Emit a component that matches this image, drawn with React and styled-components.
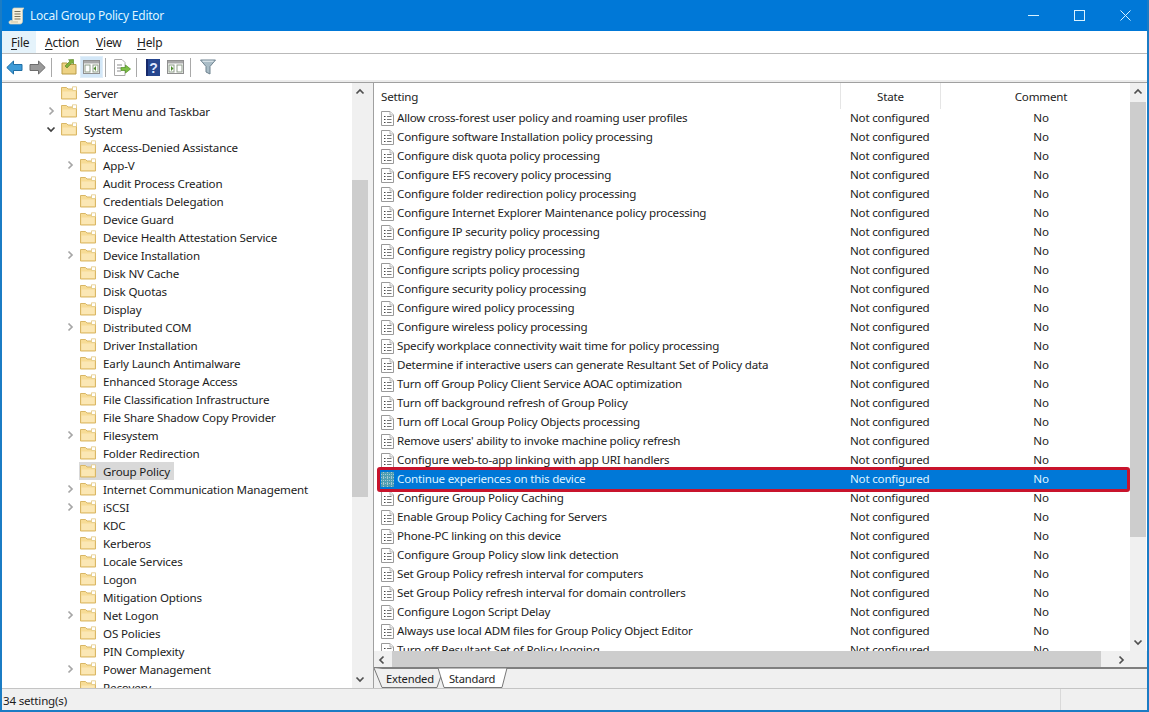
import React from "react";
import styled, { createGlobalStyle } from "styled-components";

const treeRows = [
  [1, "", "Server"],
  [1, ">", "Start Menu and Taskbar"],
  [1, "v", "System"],
  [2, "", "Access-Denied Assistance"],
  [2, ">", "App-V"],
  [2, "", "Audit Process Creation"],
  [2, "", "Credentials Delegation"],
  [2, "", "Device Guard"],
  [2, "", "Device Health Attestation Service"],
  [2, ">", "Device Installation"],
  [2, "", "Disk NV Cache"],
  [2, "", "Disk Quotas"],
  [2, "", "Display"],
  [2, ">", "Distributed COM"],
  [2, "", "Driver Installation"],
  [2, "", "Early Launch Antimalware"],
  [2, "", "Enhanced Storage Access"],
  [2, "", "File Classification Infrastructure"],
  [2, "", "File Share Shadow Copy Provider"],
  [2, ">", "Filesystem"],
  [2, "", "Folder Redirection"],
  [2, "", "Group Policy", true],
  [2, ">", "Internet Communication Management"],
  [2, ">", "iSCSI"],
  [2, "", "KDC"],
  [2, "", "Kerberos"],
  [2, "", "Locale Services"],
  [2, "", "Logon"],
  [2, "", "Mitigation Options"],
  [2, ">", "Net Logon"],
  [2, "", "OS Policies"],
  [2, "", "PIN Complexity"],
  [2, ">", "Power Management"],
  [2, "", "Recovery"],
];

const settings = [
  "Allow cross-forest user policy and roaming user profiles",
  "Configure software Installation policy processing",
  "Configure disk quota policy processing",
  "Configure EFS recovery policy processing",
  "Configure folder redirection policy processing",
  "Configure Internet Explorer Maintenance policy processing",
  "Configure IP security policy processing",
  "Configure registry policy processing",
  "Configure scripts policy processing",
  "Configure security policy processing",
  "Configure wired policy processing",
  "Configure wireless policy processing",
  "Specify workplace connectivity wait time for policy processing",
  "Determine if interactive users can generate Resultant Set of Policy data",
  "Turn off Group Policy Client Service AOAC optimization",
  "Turn off background refresh of Group Policy",
  "Turn off Local Group Policy Objects processing",
  "Remove users' ability to invoke machine policy refresh",
  "Configure web-to-app linking with app URI handlers",
  "Continue experiences on this device",
  "Configure Group Policy Caching",
  "Enable Group Policy Caching for Servers",
  "Phone-PC linking on this device",
  "Configure Group Policy slow link detection",
  "Set Group Policy refresh interval for computers",
  "Set Group Policy refresh interval for domain controllers",
  "Configure Logon Script Delay",
  "Always use local ADM files for Group Policy Object Editor",
  "Turn off Resultant Set of Policy logging",
];

const SELECTED = "Continue experiences on this device";

const GlobalStyle = createGlobalStyle`
  html, body {
    margin: 0;
    padding: 0;
    background: #0078d7;
  }
  * {
    box-sizing: border-box;
  }
`;

const Window = styled.div`
  width: 1149px;
  height: 712px;
  display: grid;
  grid-template-columns: minmax(0, 1fr);
  grid-template-rows: 31px 23px 26px 3px 606px 1fr;
  background: #fff;
  border: solid #1b7cc4;
  border-width: 0 2px 2px 2px;
  font-family: "Noto Sans", "Open Sans", sans-serif;
  font-size: 11.6px;
  letter-spacing: -0.2px;
  color: #1c1c1c;
  overflow: hidden;
`;

const TitleBar = styled.div`
  margin: 0 -2px;
  background: #0078d7;
  color: #dff4ff;
  display: flex;
  align-items: center;
  padding: 0 0 0 8px;
  font-size: 12px;
  letter-spacing: -0.25px;
`;

const TitleText = styled.span`
  margin-left: 5px;
  flex: 1;
`;

const WindowButton = styled.div`
  width: 46px;
  height: 31px;
  display: flex;
  align-items: center;
  justify-content: center;
  margin-right: ${(p) => p.$gap || 0}px;
`;

const MenuBar = styled.div`
  display: flex;
  align-items: stretch;
  border-bottom: 1px solid #b9b9b9;
  background: #fff;
`;

const MenuItem = styled.div`
  width: ${(p) => p.$w}px;
  display: flex;
  align-items: center;
  padding-left: 9px;
  background: ${(p) => (p.$active ? "#e5f3fb" : "transparent")};
  font-size: 12px;
  letter-spacing: -0.2px;
  u {
    text-decoration-thickness: 1px;
    text-underline-offset: 2px;
  }
`;

const Toolbar = styled.div`
  display: flex;
  align-items: center;
  padding-left: 1px;
  background: #fff;
`;

const ToolButton = styled.div`
  width: 23px;
  height: 22px;
  display: flex;
  align-items: center;
  justify-content: center;
  background: ${(p) => (p.$on ? "#d3e7f7" : "transparent")};
  border: 1px solid ${(p) => (p.$on ? "#e0eef9" : "transparent")};
`;

const ToolSep = styled.div`
  width: 1px;
  height: 19px;
  background: #a9a9a9;
  margin: 0 ${(p) => p.$r}px 0 ${(p) => p.$l}px;
`;

const GrayBand = styled.div`
  background: #ececec;
  border-bottom: 1px solid #a0a0a0;
`;

const Panes = styled.div`
  display: grid;
  grid-template-columns: 366px 5px minmax(0, 1fr);
  min-height: 0;
  background: #f0f0f0;
  border-bottom: 1px solid #c4c4c4;
`;

const TreePane = styled.div`
  display: flex;
  background: #fff;
  min-height: 0;
`;

const TreeList = styled.div`
  flex: 1;
  overflow: hidden;
  padding-top: 1px;
`;

const TreeRow = styled.div`
  height: 18px;
  display: flex;
  align-items: center;
  padding-left: ${(p) => (p.$level === 1 ? 43 : 62)}px;
  white-space: nowrap;
`;

const Twisty = styled.div`
  width: 12px;
  height: 18px;
  display: flex;
  align-items: center;
  justify-content: center;
  margin-right: 3px;
`;

const TreeLabel = styled.span`
  margin-left: 7px;
  letter-spacing: -0.16px;
`;

const FolderWrap = styled.div`
  display: flex;
  align-items: center;
  background: ${(p) => (p.$on ? "#d9d9d9" : "transparent")};
  height: 18px;
  padding: 0 4px 0 1px;
`;

const Divider = styled.div`
  background: #f0f0f0;
`;

const RightPane = styled.div`
  display: grid;
  grid-template-columns: minmax(0, 1fr);
  grid-template-rows: minmax(0, 1fr) 16px 21px;
  min-height: 0;
  background: #fff;
  border-left: 1px solid #a0a0a0;
`;

const ListArea = styled.div`
  display: flex;
  min-height: 0;
`;

const ListColumn = styled.div`
  flex: 1;
  min-width: 0;
  overflow: hidden;
  display: flex;
  flex-direction: column;
`;

const Header = styled.div`
  flex: none;
  height: 26px;
  display: grid;
  grid-template-columns: 467px 100px 200px;
  align-items: stretch;
`;

const HeadCell = styled.div`
  display: flex;
  align-items: center;
  justify-content: ${(p) => (p.$center ? "center" : "flex-start")};
  padding-left: ${(p) => (p.$center ? 0 : 7)}px;
  border-right: ${(p) => (p.$line ? "1px solid #e5e5e5" : "0")};
`;

const Row = styled.div`
  flex: none;
  height: 19px;
  display: grid;
  grid-template-columns: 461px 100px 200px;
  align-items: center;
  margin-left: 6px;
  width: 747px;
  background: ${(p) => (p.$on ? "#0078d7" : "transparent")};
  color: ${(p) => (p.$on ? "#dff4ff" : "inherit")};
  position: relative;
  z-index: ${(p) => (p.$on ? 1 : 0)};
  &:after {
    content: "";
    display: ${(p) => (p.$on ? "block" : "none")};
    position: absolute;
    inset: -3px;
    border: 3px solid #c8142c;
    border-radius: 3px;
  }
`;

const NameCell = styled.div`
  display: flex;
  align-items: center;
  white-space: nowrap;
  margin-left: -6px;
  padding-left: 7px;
`;

const NameText = styled.span`
  margin: 0 0 2px 3px;
`;

const StateCell = styled.div`
  padding: 0 0 2px 9px;
  white-space: nowrap;
`;

const CommentCell = styled.div`
  padding-bottom: 2px;
  text-align: center;
`;

const ScrollV = styled.div`
  flex: none;
  width: 16px;
  margin-right: ${(p) => p.$gap || 0}px;
  background: #f0f0f0;
  display: flex;
  flex-direction: column;
`;

const ScrollH = styled.div`
  display: flex;
  background: #f0f0f0;
  padding-right: 18px;
`;

const Arrow = styled.div`
  flex: none;
  width: 16px;
  height: 18px;
  display: flex;
  align-items: center;
  justify-content: center;
`;

const VThumb = styled.div`
  flex: none;
  height: ${(p) => p.$h}px;
  margin-top: ${(p) => p.$top}px;
  background: #cdcdcd;
`;

const VSpacer = styled.div`
  flex: 1;
`;

const HThumb = styled.div`
  flex: 1;
  margin: 0 12px 0 2px;
  background: #cdcdcd;
`;

const TabStrip = styled.div`
  display: flex;
  align-items: center;
  background: #f0f0f0;
  border-top: 2px solid #7f7f7f;
  position: relative;
  padding: 0 0 1px 12px;
`;

const TabShapes = styled.svg`
  position: absolute;
  left: 0;
  top: -1px;
`;

const TabLabel = styled.span`
  position: relative;
  font-size: 11.2px;
  margin-right: ${(p) => p.$gap || 0}px;
`;

const StatusBar = styled.div`
  display: grid;
  grid-template-columns: 1fr 87px;
  background: #f0f0f0;
`;

const StatusCell = styled.div`
  display: flex;
  align-items: center;
  padding: 2px 0 0 1px;
  & + & {
    border-left: 1px solid #d9d9d9;
  }
`;

const Chevron = ({ dir, color = "#6a6a6a", size = 10, width = 1.7 }) => {
  const paths = {
    right: "M3.5 1.5 L7 5 L3.5 8.5",
    left: "M6.5 1.5 L3 5 L6.5 8.5",
    up: "M1.5 6.5 L5 3 L8.5 6.5",
    down: "M1.5 3.5 L5 7 L8.5 3.5",
  };
  return (
    <svg width={size} height={size} viewBox="0 0 10 10">
      <path d={paths[dir]} fill="none" stroke={color} strokeWidth={width} />
    </svg>
  );
};

const FolderIcon = () => (
  <svg width="16" height="14" viewBox="0 0 16 14">
    <path d="M0.5 13 V1.5 H5.5 L7 3 H15.5 V13 Z" fill="#f7dc96" stroke="#d9b766" />
    <path d="M1.5 12 V5.5 H14.5 V12 Z" fill="#fbe7b4" />
    <path d="M11.5 0.8 H15.5 V4.5 H11.5 Z" fill="#fff" stroke="#e2c77f" strokeWidth="0.8" />
  </svg>
);

const PolicyIcon = ({ on }) =>
  on ? (
    <svg width="13" height="15" viewBox="0 0 13 15">
      <rect x="0" y="0" width="13" height="15" fill="#4f9fb2" />
      <path d="M0 2.5 H13 M0 5.5 H13 M0 8.5 H13 M0 11.5 H13 M2.5 0 V15 M6.5 0 V15 M10.5 0 V15" stroke="#a7c9d3" strokeWidth="1" strokeDasharray="1 1" />
    </svg>
  ) : (
    <svg width="13" height="15" viewBox="0 0 13 15">
      <path d="M0.5 0.5 H9 L12.5 4 V14.5 H0.5 Z" fill="#fff" stroke="#9a9a9a" />
      <path d="M9 0.5 V4 H12.5" fill="#f0f0f0" stroke="#b5b5b5" />
      <path d="M3 5.5 H4.5 M3 8.5 H4.5 M3 11.5 H4.5" stroke="#444" strokeWidth="1.2" />
      <path d="M6 5.5 H10.5 M6 8.5 H10.5 M6 11.5 H10.5" stroke="#777" strokeWidth="1.2" />
    </svg>
  );

const AppIcon = () => (
  <svg width="17" height="18" viewBox="0 0 17 18">
    <path d="M6 1 H16 C15 2 14.5 3 14.5 4.5 V14 C14.5 16 13.5 17 12 17 H2.5 C0.5 17 0.5 14 2.5 13.5 H4.5 V3.5 C4.5 2 5 1.2 6 1 Z" fill="#f6f0dc" stroke="#d8d0b4" strokeWidth="0.7" />
    <path d="M6.5 4.5 H12.5 M6.5 7 H12.5 M6.5 9.5 H12.5 M6.5 12 H12.5" stroke="#77725e" strokeWidth="1" />
    <path d="M2.5 15 H10" stroke="#c7bf9f" strokeWidth="1" />
  </svg>
);

const NavArrow = ({ back, fill, stroke }) => (
  <svg width="17" height="15" viewBox="0 0 17 15" style={back ? undefined : { transform: "scaleX(-1)" }}>
    <path d="M0.8 7.5 L7.5 1 V4.5 H16 V10.5 H7.5 V14 Z" fill={fill} stroke={stroke} strokeLinejoin="round" />
  </svg>
);

const UpFolderIcon = () => (
  <svg width="16" height="16" viewBox="0 0 16 16">
    <path d="M1 15 V4 H6 L7 5.5 H15 V15 Z" fill="#edd284" stroke="#b99c46" />
    <path d="M4 7 L9 2 L7.5 0.8 L12.5 0.5 L12.5 5 L11 3.8 L6 9 Z" fill="#7fb13c" stroke="#4f7d1c" strokeWidth="0.6" />
  </svg>
);

const PaneIcon = ({ right }) => (
  <svg width="17" height="14" viewBox="0 0 17 14">
    <rect x="0.5" y="0.5" width="16" height="13" fill="#fff" stroke="#8f8f8f" />
    <rect x="1" y="1" width="15" height="2.5" fill="#a9a9a9" />
    <rect x="2" y="5" width="5" height="7" fill="none" stroke="#8f9e8a" />
    <rect x="10" y="5" width="5" height="7" fill="none" stroke="#8f9e8a" />
    <path d={right ? "M4 6 L4 11 L6.5 8.5 Z" : "M13 6 L13 11 L10.5 8.5 Z"} fill="#4c8c2b" />
  </svg>
);

const ExportIcon = () => (
  <svg width="17" height="17" viewBox="0 0 17 17">
    <path d="M0.5 0.5 H8 L11 3.5 V16.5 H0.5 Z" fill="#fff" stroke="#a8a8a8" />
    <path d="M3 6 H8 M3 9 H7 M3 12 H7" stroke="#8b8b8b" />
    <path d="M7 8.5 H11.5 V6 L16.5 10 L11.5 14 V11.5 H7 Z" fill="#7cbf45" stroke="#4f8d22" strokeWidth="0.7" />
  </svg>
);

const HelpIcon = () => (
  <svg width="14" height="17" viewBox="0 0 14 17">
    <rect x="0" y="0" width="14" height="17" fill="#26468f" />
    <rect x="0" y="0" width="2" height="17" fill="#16296a" />
    <text x="7.5" y="13.5" fontFamily="Liberation Sans, sans-serif" fontSize="14" fontWeight="700" fill="#dfe8ff" textAnchor="middle">?</text>
  </svg>
);

const FilterIcon = () => (
  <svg width="16" height="16" viewBox="0 0 16 16">
    <path d="M0.5 1 H15.5 L10 7.5 V15 L6 13 V7.5 Z" fill="#a9bcc6" stroke="#6f8390" />
    <path d="M2.5 2.2 H13.5" stroke="#e8f0f4" />
  </svg>
);

const App = () => (
  <Window>
    <GlobalStyle />
    <TitleBar>
      <AppIcon />
      <TitleText>Local Group Policy Editor</TitleText>
      <WindowButton>
        <svg width="11" height="11" viewBox="0 0 11 11">
          <path d="M0 5.5 H11" stroke="#d8f2ff" />
        </svg>
      </WindowButton>
      <WindowButton>
        <svg width="11" height="11" viewBox="0 0 11 11">
          <rect x="0.5" y="0.5" width="10" height="10" fill="none" stroke="#d8f2ff" />
        </svg>
      </WindowButton>
      <WindowButton $gap={1}>
        <svg width="11" height="11" viewBox="0 0 11 11">
          <path d="M0.5 0.5 L10.5 10.5 M10.5 0.5 L0.5 10.5" stroke="#d8f2ff" />
        </svg>
      </WindowButton>
    </TitleBar>
    <MenuBar>
      <MenuItem $active $w={34}>
        <span>
          <u>F</u>ile
        </span>
      </MenuItem>
      <MenuItem $w={51}>
        <span>
          <u>A</u>ction
        </span>
      </MenuItem>
      <MenuItem $w={41}>
        <span>
          <u>V</u>iew
        </span>
      </MenuItem>
      <MenuItem $w={40}>
        <span>
          <u>H</u>elp
        </span>
      </MenuItem>
    </MenuBar>
    <Toolbar>
      <ToolButton>
        <NavArrow back fill="#3d9bd8" stroke="#1f6ea5" />
      </ToolButton>
      <ToolButton>
        <NavArrow fill="#9a9a9a" stroke="#6d6d6d" />
      </ToolButton>
      <ToolSep $l={2} $r={5} />
      <ToolButton>
        <UpFolderIcon />
      </ToolButton>
      <ToolButton $on>
        <PaneIcon />
      </ToolButton>
      <ToolSep $l={2} $r={5} />
      <ToolButton>
        <ExportIcon />
      </ToolButton>
      <ToolSep $l={2} $r={4} />
      <ToolButton>
        <HelpIcon />
      </ToolButton>
      <ToolButton>
        <PaneIcon right />
      </ToolButton>
      <ToolSep $l={3} $r={5} />
      <ToolButton>
        <FilterIcon />
      </ToolButton>
    </Toolbar>
    <GrayBand />
    <Panes>
      <TreePane>
        <TreeList>
          {treeRows.map(([level, twisty, label, on]) => (
            <TreeRow key={label} $level={level}>
              <Twisty>
                {twisty === ">" && <Chevron dir="right" color="#a6a6a6" />}
                {twisty === "v" && <Chevron dir="down" color="#404040" />}
              </Twisty>
              <FolderWrap $on={on}>
                <FolderIcon />
                <TreeLabel>{label}</TreeLabel>
              </FolderWrap>
            </TreeRow>
          ))}
        </TreeList>
        <ScrollV>
          <Arrow>
            <Chevron dir="up" color="#505050" />
          </Arrow>
          <VThumb $top={79} $h={317} />
          <VSpacer />
          <Arrow>
            <Chevron dir="down" color="#505050" />
          </Arrow>
        </ScrollV>
      </TreePane>
      <Divider />
      <RightPane>
        <ListArea>
          <ListColumn>
            <Header>
              <HeadCell $line>Setting</HeadCell>
              <HeadCell $line $center>
                State
              </HeadCell>
              <HeadCell $center>Comment</HeadCell>
            </Header>
            {settings.map((name) => {
              const on = name === SELECTED;
              return (
                <Row key={name} $on={on}>
                  <NameCell>
                    <PolicyIcon on={on} />
                    <NameText>{name}</NameText>
                  </NameCell>
                  <StateCell>Not configured</StateCell>
                  <CommentCell>No</CommentCell>
                </Row>
              );
            })}
          </ListColumn>
          <ScrollV $gap={1}>
            <Arrow>
              <Chevron dir="up" color="#505050" />
            </Arrow>
            <VThumb $top={1} $h={435} />
            <VSpacer />
            <Arrow>
              <Chevron dir="down" color="#505050" />
            </Arrow>
          </ScrollV>
        </ListArea>
        <ScrollH>
          <Arrow>
            <Chevron dir="left" color="#505050" />
          </Arrow>
          <HThumb />
          <Arrow>
            <Chevron dir="right" color="#505050" />
          </Arrow>
        </ScrollH>
        <TabStrip>
          <TabShapes width="140" height="21" viewBox="0 0 140 21">
            <path d="M0 0 L8 19.5 H63 L67 8" fill="#f0f0f0" stroke="#777" />
            <path d="M64 0 L70 19.5 H128 L133 0 Z" fill="#fff" stroke="#777" />
          </TabShapes>
          <TabLabel $gap={15}>Extended</TabLabel>
          <TabLabel>Standard</TabLabel>
        </TabStrip>
      </RightPane>
    </Panes>
    <StatusBar>
      <StatusCell>34 setting(s)</StatusCell>
      <StatusCell />
    </StatusBar>
  </Window>
);

export default App;
